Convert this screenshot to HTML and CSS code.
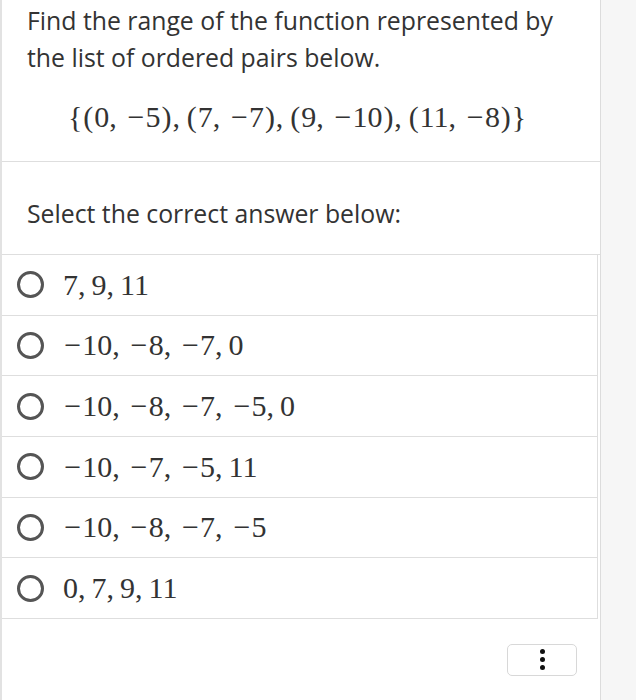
FILE: index.html
```html
<!DOCTYPE html>
<html>
<head>
<meta charset="utf-8">
<link rel="stylesheet" href="styles.css">
</head>
<body>
<div class="page">
  <div class="panel">
    <section class="question">
      <p class="prompt">Find the range of the function represented by the list of ordered pairs below.</p>
      <div class="math set"><span class="br">{</span><span class="pa">(</span>0<span class="c">,</span><span class="m">−</span>5<span class="pa">)</span><span class="c">,</span><span class="pa">(</span>7<span class="c">,</span><span class="m">−</span>7<span class="pa">)</span><span class="c">,</span><span class="pa">(</span>9<span class="c">,</span><span class="m">−</span>10<span class="pa">)</span><span class="c">,</span><span class="pa">(</span>11<span class="c">,</span><span class="m">−</span>8<span class="pa">)</span><span class="br">}</span></div>
    </section>
    <section class="instr">Select the correct answer below:</section>
    <ul class="options">
      <li class="option"><span class="radio"></span><span class="math">7<span class="c">,</span>9<span class="c">,</span>11</span></li>
      <li class="option"><span class="radio"></span><span class="math"><span class="m">−</span>10<span class="c">,</span><span class="m">−</span>8<span class="c">,</span><span class="m">−</span>7<span class="c">,</span>0</span></li>
      <li class="option"><span class="radio"></span><span class="math"><span class="m">−</span>10<span class="c">,</span><span class="m">−</span>8<span class="c">,</span><span class="m">−</span>7<span class="c">,</span><span class="m">−</span>5<span class="c">,</span>0</span></li>
      <li class="option"><span class="radio"></span><span class="math"><span class="m">−</span>10<span class="c">,</span><span class="m">−</span>7<span class="c">,</span><span class="m">−</span>5<span class="c">,</span>11</span></li>
      <li class="option"><span class="radio"></span><span class="math"><span class="m">−</span>10<span class="c">,</span><span class="m">−</span>8<span class="c">,</span><span class="m">−</span>7<span class="c">,</span><span class="m">−</span>5</span></li>
      <li class="option"><span class="radio"></span><span class="math">0<span class="c">,</span>7<span class="c">,</span>9<span class="c">,</span>11</span></li>
    </ul>
    <div class="footer">
      <button class="more" type="button" aria-label="More">
        <span class="dot"></span><span class="dot"></span><span class="dot"></span>
      </button>
    </div>
  </div>
  <div class="side"></div>
</div>
</body>
</html>
```

FILE: styles.css
```css
html, body {
  margin: 0;
  padding: 0;
  background: #f6f6f6;
}
.page {
  display: flex;
  height: 700px;
  font-family: "Open Sans", "Liberation Sans", sans-serif;
  color: #333;
}
.panel {
  width: 598px;
  border-left: 2px solid #e2e2e2;
  border-right: 1px solid #dcdcdc;
  background: #fff;
  display: flex;
  flex-direction: column;
}
.side {
  flex: 1;
  background: #f6f6f6;
}
.question {
  box-sizing: border-box;
  height: 162px;
  border-bottom: 1px solid #dedede;
  padding: 2px 0 0 25px;
}
.prompt {
  margin: 0;
  font-size: 24.8px;
  line-height: 37px;
  width: 540px;
}
.math {
  font-family: "Liberation Serif", "Times New Roman", serif;
  color: #333;
  white-space: nowrap;
}
.math .m {
  margin: 0 0.04em 0 0.16em;
}
.math .c {
  margin-right: 0.2em;
}
.math .pa {
  margin: 0 0.03em;
}
.set {
  font-size: 30px;
  margin: 23px 0 0 41px;
  line-height: 36px;
}
.instr {
  height: 93px;
  box-sizing: border-box;
  padding: 33px 0 0 25px;
  font-size: 24.8px;
  line-height: 36px;
  border-bottom: 1px solid #dedede;
}
.options {
  list-style: none;
  margin: 0;
  padding: 0;
  width: 595px;
  border-right: 1px solid #dedede;
}
.option {
  height: 59.67px;
  border-bottom: 1px solid #dedede;
  display: flex;
  align-items: center;
  padding-left: 15px;
  gap: 19px;
  font-size: 30px;
}
.option .math > .m:first-child {
  margin-left: 0.04em;
}
.radio {
  width: 21px;
  height: 21px;
  border: 3px solid #555;
  border-radius: 50%;
  flex: none;
}
.footer {
  flex: 1;
  display: flex;
  justify-content: flex-end;
  align-items: flex-start;
  padding: 25px 23px 0 0;
}
.more {
  width: 70px;
  height: 32px;
  border: 1px solid #d8d8d8;
  border-radius: 5px;
  background: #fff;
  display: flex;
  flex-direction: column;
  align-items: center;
  justify-content: center;
  gap: 3px;
  padding: 0;
}
.dot {
  width: 5px;
  height: 5px;
  background: #111;
  border-radius: 50%;
}
```
